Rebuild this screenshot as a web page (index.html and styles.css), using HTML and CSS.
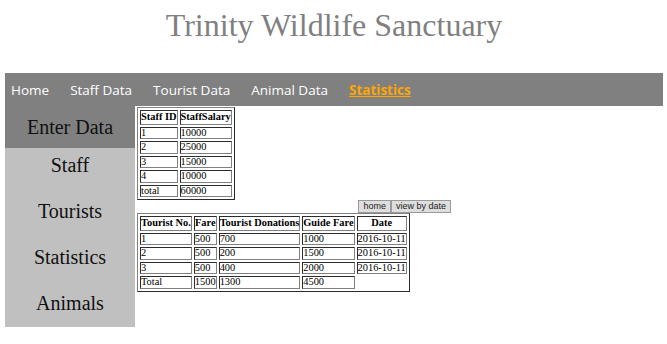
FILE: index.html
```html
<!DOCTYPE html>
<html>
<head>
<meta charset="utf-8">
<title>Trinity Wildlife Sanctuary</title>
<link rel="stylesheet" href="styles.css">
</head>
<body>
<div class="page">
  <h1 class="title">Trinity Wildlife Sanctuary</h1>
  <nav class="topnav">
    <a href="#">Home</a>
    <a href="#">Staff Data</a>
    <a href="#">Tourist Data</a>
    <a href="#">Animal Data</a>
    <a href="#" class="active">Statistics</a>
  </nav>
  <div class="main">
    <aside class="sidebar">
      <div class="side-head">Enter Data</div>
      <div class="side-list">
        <div class="side-item">Staff</div>
        <div class="side-item">Tourists</div>
        <div class="side-item">Statistics</div>
        <div class="side-item">Animals</div>
      </div>
    </aside>
    <section class="content">
      <table class="data" border="1">
        <tr><th>Staff ID</th><th>StaffSalary</th></tr>
        <tr><td>1</td><td>10000</td></tr>
        <tr><td>2</td><td>25000</td></tr>
        <tr><td>3</td><td>15000</td></tr>
        <tr><td>4</td><td>10000</td></tr>
        <tr><td>total</td><td>60000</td></tr>
      </table>
      <div class="actions">
        <button class="btn">home</button><button class="btn">view by date</button>
      </div>
      <table class="data" border="1">
        <tr><th>Tourist No.</th><th>Fare</th><th>Tourist Donations</th><th>Guide Fare</th><th class="date">Date</th></tr>
        <tr><td>1</td><td>500</td><td>700</td><td>1000</td><td>2016-10-11</td></tr>
        <tr><td>2</td><td>500</td><td>200</td><td>1500</td><td>2016-10-11</td></tr>
        <tr><td>3</td><td>500</td><td>400</td><td>2000</td><td>2016-10-11</td></tr>
        <tr><td>Total</td><td>1500</td><td>1300</td><td>4500</td></tr>
      </table>
    </section>
  </div>
</div>
</body>
</html>
```

FILE: styles.css
```css
html, body {
  margin: 0;
  padding: 0;
  background: #ffffff;
}

.page {
  padding: 7px 4px 0 5px;
  font-family: "Liberation Serif", "Times New Roman", serif;
}

.title {
  margin: 0;
  height: 66px;
  font-size: 32px;
  line-height: 37px;
  font-weight: normal;
  text-align: center;
  color: #808080;
}

.topnav {
  display: flex;
  align-items: center;
  gap: 21px;
  height: 33px;
  padding-left: 6px;
  background: #808080;
  font-family: "Comic Sans MS", "Open Sans", sans-serif;
  font-size: 13.5px;
}

.topnav a {
  color: #ffffff;
  text-decoration: none;
}

.topnav a.active {
  color: #ffa500;
  font-weight: bold;
  text-decoration: underline;
}

.main {
  display: flex;
  align-items: flex-start;
}

.sidebar {
  width: 130px;
  flex: none;
  font-size: 20px;
  color: #111111;
  text-align: center;
}

.side-head {
  height: 42px;
  line-height: 42px;
  background: #808080;
}

.side-list {
  display: flex;
  flex-direction: column;
  gap: 20px;
  padding: 4px 0 11px;
  background: #c0c0c0;
}

.side-item {
  line-height: 26px;
}

.content {
  padding: 1px 0 0 2px;
}

.data {
  border-collapse: separate;
  border-spacing: 2px;
  border: 1px outset #808080;
  font-size: 10.4px;
  line-height: 10.5px;
  color: #000000;
}

.data th,
.data td {
  border: 1px inset #808080;
  padding: 0;
  white-space: nowrap;
}

.data th {
  padding-top: 1px;
  padding-bottom: 1px;
  font-weight: bold;
}

.data td {
  text-align: left;
}

.actions {
  display: flex;
  justify-content: flex-end;
  width: 314px;
}

.btn {
  margin: 0;
  padding: 0 4px;
  height: 13px;
  font-family: "Liberation Sans", Arial, sans-serif;
  font-size: 9px;
  line-height: 11px;
  color: #222222;
  background: #dedede;
  border: 1px solid #9a9a9a;
  border-radius: 0;
}
```
